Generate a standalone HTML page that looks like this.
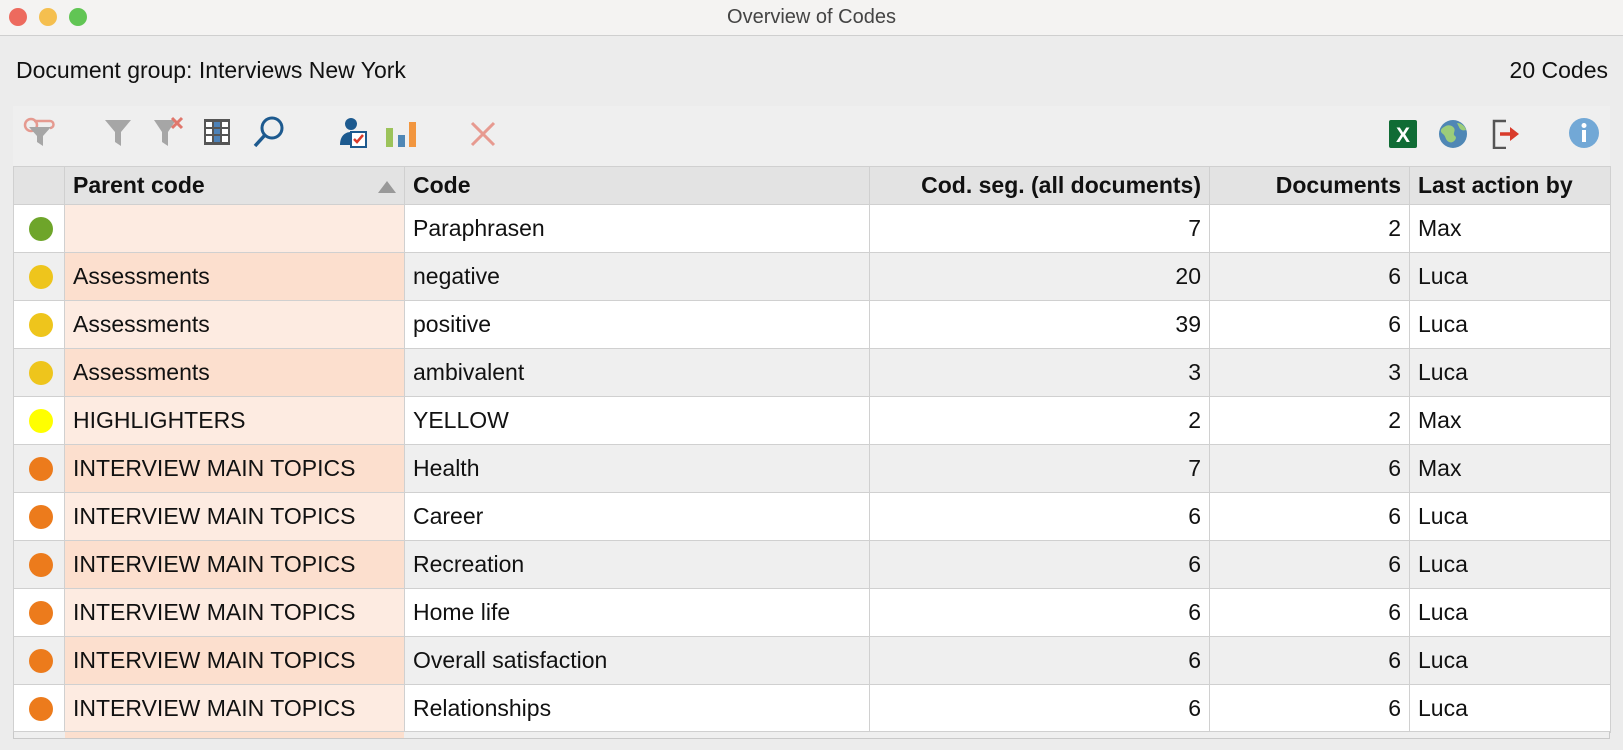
<!DOCTYPE html>
<html><head><meta charset="utf-8"><style>
*{margin:0;padding:0;box-sizing:border-box}
body{width:1623px;height:750px;background:#ececec;font-family:"Liberation Sans",sans-serif;overflow:hidden;position:relative;color:#111}
.tb{position:absolute;left:0;top:0;width:1623px;height:36px;background:#f4f3f2;border-bottom:1px solid #cfcfcf}
.tl{position:absolute;top:8px;width:18px;height:18px;border-radius:50%}
.title{position:absolute;top:6px;left:0;width:1623px;text-align:center;font-size:20px;color:#444}
.hdr{position:absolute;top:57px;font-size:23px}
.tool{position:absolute;left:13px;top:106px;width:1597px;height:61px;background:#efefef}
.ic{position:absolute;top:115px}
table{position:absolute;left:13px;top:166px;border-collapse:collapse;table-layout:fixed;font-size:23px;border:1px solid #c9c9c9}
td,th{height:48px;border:1px solid #d0d0d0;padding:0 8px;white-space:nowrap;overflow:hidden}
th{height:38px;background:#e3e3e3;font-weight:bold;text-align:left}
tr td{background:#fff}
tr:nth-child(odd) td{background:#efefef}
td.p{background:#fdebe1}
tr:nth-child(odd) td.p{background:#fcdfce}
.r{text-align:right}
.d{display:block;width:24px;height:24px;border-radius:50%;margin-left:7px}
</style></head><body>
<div class="tb">
<div class="tl" style="left:9px;background:#ed6a5e"></div>
<div class="tl" style="left:39px;background:#f5bf4f"></div>
<div class="tl" style="left:69px;background:#61c554"></div>
<div class="title">Overview of Codes</div>
</div>
<div class="hdr" style="left:16px">Document group: Interviews New York</div>
<div class="hdr" style="right:15px">20 Codes</div>
<div class="tool"></div>
<svg class="ic" style="left:20px" width="36" height="36" viewBox="0 0 36 36"><path d="M14 6h16a3 3 0 010 7" fill="none" stroke="#e59a90" stroke-width="2.5"/><circle cx="11" cy="10" r="6" fill="none" stroke="#e59a90" stroke-width="2.5"/><path d="M9 12h22l-8 9v10l-6-4v-6z" fill="#a6a6a6"/></svg>
<svg class="ic" style="left:103px" width="32" height="36" viewBox="0 0 32 36"><path d="M2 5h26l-10 12v14l-6-4V17z" fill="#a6a6a6"/></svg>
<svg class="ic" style="left:152px" width="36" height="36" viewBox="0 0 36 36"><path d="M2 5h22l-8 12v14l-6-4V17z" fill="#a6a6a6"/><path d="M20 3l10 10M30 3L20 13" stroke="#e0776c" stroke-width="3"/></svg>
<svg class="ic" style="left:203px" width="28" height="30" viewBox="0 0 28 30"><rect x="1" y="4" width="26" height="26" fill="#555"/><g fill="#fff"><rect x="3" y="7" width="6" height="5"/><rect x="19" y="7" width="6" height="5"/><rect x="3" y="14" width="6" height="5"/><rect x="19" y="14" width="6" height="5"/><rect x="3" y="21" width="6" height="6"/><rect x="19" y="21" width="6" height="6"/></g><g fill="#4d82b8"><rect x="11" y="7" width="6" height="5"/><rect x="11" y="14" width="6" height="5"/><rect x="11" y="21" width="6" height="6"/></g></svg>
<svg class="ic" style="left:252px" width="34" height="34" viewBox="0 0 34 34"><circle cx="20" cy="13" r="10" fill="none" stroke="#1d5a8f" stroke-width="3"/><path d="M13 20L3 31" stroke="#1d5a8f" stroke-width="3.5"/></svg>
<svg class="ic" style="left:338px" width="32" height="36" viewBox="0 0 32 36"><circle cx="13" cy="9" r="6" fill="#1d5a8f"/><path d="M2 30c0-9 5-13 11-13s10 3 11 6v7z" fill="#1d5a8f"/><rect x="13" y="17" width="15" height="15" fill="#fff" stroke="#1d5a8f" stroke-width="2"/><path d="M16 24l3 3 6-7" fill="none" stroke="#d93b2b" stroke-width="2.5"/></svg>
<svg class="ic" style="left:384px" width="34" height="36" viewBox="0 0 34 36"><rect x="2" y="13" width="7" height="19" fill="#9cc35a"/><rect x="14" y="20" width="7" height="12" fill="#4f87b5"/><rect x="25" y="7" width="7" height="25" fill="#f2963f"/></svg>
<svg class="ic" style="left:469px" width="28" height="36" viewBox="0 0 28 36"><path d="M3 8l22 22M25 8L3 30" stroke="#e79a90" stroke-width="3"/></svg>
<svg class="ic" style="left:1388px" width="30" height="34" viewBox="0 0 30 34"><rect x="1" y="5" width="28" height="28" rx="2" fill="#106c35"/><text x="15" y="27" text-anchor="middle" font-family="Liberation Sans" font-weight="bold" font-size="21" fill="#fff">X</text></svg>
<svg class="ic" style="left:1438px" width="30" height="34" viewBox="0 0 30 34"><circle cx="15" cy="19" r="14" fill="#4f87b5"/><path d="M6 12c4-3 8-2 10 1s-2 6 1 8-2 8-6 6-3-6-6-8-3-5 1-7zM19 8c4 0 8 3 9 7-3 1-6 0-7-3z" fill="#9ccd7a"/></svg>
<svg class="ic" style="left:1492px" width="30" height="34" viewBox="0 0 30 34"><path d="M14 6H2v27h12" fill="none" stroke="#555" stroke-width="2.5"/><path d="M8 19h12" stroke="#d93b2b" stroke-width="3.5"/><path d="M18 12l9 7-9 7z" fill="#d93b2b"/></svg>
<svg class="ic" style="left:1568px" width="32" height="34" viewBox="0 0 32 34"><circle cx="16" cy="18" r="15" fill="#72a8d6"/><rect x="14" y="15" width="4" height="12" fill="#fff"/><circle cx="16" cy="10.5" r="2.5" fill="#fff"/></svg>
<table>
<colgroup><col style="width:51px"><col style="width:340px"><col style="width:465px"><col style="width:340px"><col style="width:200px"><col style="width:201px"></colgroup>
<tr><th></th><th>Parent code<span style="float:right;width:0;height:0;border-left:9px solid transparent;border-right:9px solid transparent;border-bottom:12px solid #999;margin-top:9px"></span></th><th>Code</th><th class="r">Cod. seg. (all documents)</th><th class="r">Documents</th><th>Last action by</th></tr>
<tr><td><i class="d" style="background:#6ea52a"></i></td><td class="p"></td><td>Paraphrasen</td><td class="r">7</td><td class="r">2</td><td>Max</td></tr>
<tr><td><i class="d" style="background:#eec51c"></i></td><td class="p">Assessments</td><td>negative</td><td class="r">20</td><td class="r">6</td><td>Luca</td></tr>
<tr><td><i class="d" style="background:#eec51c"></i></td><td class="p">Assessments</td><td>positive</td><td class="r">39</td><td class="r">6</td><td>Luca</td></tr>
<tr><td><i class="d" style="background:#eec51c"></i></td><td class="p">Assessments</td><td>ambivalent</td><td class="r">3</td><td class="r">3</td><td>Luca</td></tr>
<tr><td><i class="d" style="background:#ffff00"></i></td><td class="p">HIGHLIGHTERS</td><td>YELLOW</td><td class="r">2</td><td class="r">2</td><td>Max</td></tr>
<tr><td><i class="d" style="background:#ec7b1c"></i></td><td class="p">INTERVIEW MAIN TOPICS</td><td>Health</td><td class="r">7</td><td class="r">6</td><td>Max</td></tr>
<tr><td><i class="d" style="background:#ec7b1c"></i></td><td class="p">INTERVIEW MAIN TOPICS</td><td>Career</td><td class="r">6</td><td class="r">6</td><td>Luca</td></tr>
<tr><td><i class="d" style="background:#ec7b1c"></i></td><td class="p">INTERVIEW MAIN TOPICS</td><td>Recreation</td><td class="r">6</td><td class="r">6</td><td>Luca</td></tr>
<tr><td><i class="d" style="background:#ec7b1c"></i></td><td class="p">INTERVIEW MAIN TOPICS</td><td>Home life</td><td class="r">6</td><td class="r">6</td><td>Luca</td></tr>
<tr><td><i class="d" style="background:#ec7b1c"></i></td><td class="p">INTERVIEW MAIN TOPICS</td><td>Overall satisfaction</td><td class="r">6</td><td class="r">6</td><td>Luca</td></tr>
<tr><td><i class="d" style="background:#ec7b1c"></i></td><td class="p">INTERVIEW MAIN TOPICS</td><td>Relationships</td><td class="r">6</td><td class="r">6</td><td>Luca</td></tr>
</table>
<div style="position:absolute;left:13px;top:731px;width:1597px;height:8px;background:#efefef;border:1px solid #c9c9c9;border-top:1px solid #d0d0d0"></div>
<div style="position:absolute;left:65px;top:732px;width:339px;height:6px;background:#fcdfce"></div>
</body></html>
